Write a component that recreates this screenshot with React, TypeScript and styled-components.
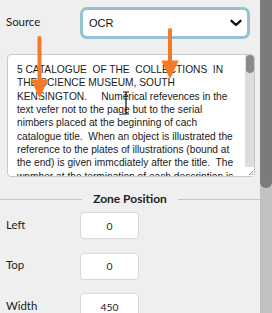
import React from "react";
import styled, { createGlobalStyle } from "styled-components";

const GlobalStyle = createGlobalStyle`
  html, body {
    margin: 0;
    padding: 0;
    background: #efefef;
    overflow: hidden;
  }
  body {
    font-family: Lato, "Open Sans", sans-serif;
    color: #1e1e1e;
  }
`;

const Frame = styled.div`
  display: flex;
  width: 272px;
  height: 313px;
  overflow: hidden;
  background: #efefef;
`;

const Panel = styled.div`
  position: relative;
  width: 260px;
  flex: none;
  padding-top: 7px;
`;

const PageTrack = styled.div`
  width: 12px;
  height: 313px;
  background: #c2c2c2;
`;

const PageThumb = styled.div`
  height: 188px;
  background: #7b7b7b;
  border-radius: 0 0 6px 6px;
`;

const FieldRow = styled.div`
  display: grid;
  grid-template-columns: 74px auto;
  align-items: center;
  padding-left: 6px;
  font-size: 11.4px;
  color: #1c1c1c;
`;

const Label = styled.span<{ $lift?: number }>`
  position: relative;
  top: ${(p) => -(p.$lift ?? 0)}px;
`;

const SelectBox = styled.div`
  box-sizing: border-box;
  width: 170px;
  height: 32px;
  border: 3px solid #93c2d2;
  border-radius: 7px;
  background: #fff;
  display: flex;
  align-items: center;
  justify-content: space-between;
  padding: 0 5px 0 6px;
  font-family: "Liberation Sans", Arial, sans-serif;
  font-size: 11px;
  color: #111;
`;

const TextWrap = styled.div`
  position: relative;
  margin: 15px 0 0 7px;
  width: 248px;
  height: 123px;
`;

const TextBox = styled.textarea`
  display: block;
  box-sizing: border-box;
  width: 100%;
  height: 100%;
  padding: 8px 12px 0 9px;
  border: 1px solid #c9c9c9;
  border-radius: 4px;
  background: #fff;
  font-family: "Liberation Sans", Arial, sans-serif;
  font-size: 10.2px;
  line-height: 13.35px;
  color: #1a1a1a;
  white-space: pre;
  overflow: hidden;
  resize: none;
  outline: none;
`;

const InnerTrack = styled.div`
  position: absolute;
  top: 1px;
  right: 1px;
  bottom: 1px;
  width: 9px;
  background: #dcdcdc;
  border-radius: 0 3px 3px 0;
  display: flex;
  flex-direction: column;
  justify-content: space-between;
`;

const InnerThumb = styled.div`
  height: 18px;
  margin: 0 0.5px;
  background: #8a8a8a;
  border-radius: 4px;
`;

const Grip = styled.div`
  width: 9px;
  height: 9px;
  background: #fff;
  display: flex;
  align-items: flex-end;
  justify-content: flex-end;
`;

const Divider = styled.div`
  display: flex;
  align-items: center;
  gap: 11px;
  width: 260px;
  margin-top: 15px;
  font-weight: 700;
  font-size: 12px;
  line-height: 14px;
  color: #222;
  &::before,
  &::after {
    content: "";
    flex: 1;
    height: 1px;
    background: #c6c6c6;
  }
`;

const Rows = styled.div`
  display: flex;
  flex-direction: column;
  gap: 13.5px;
  margin-top: 6px;
`;

const NumberBox = styled.div`
  box-sizing: border-box;
  width: 59px;
  height: 27px;
  border: 1px solid #d8d8d8;
  border-radius: 4px;
  background: #fff;
  display: flex;
  align-items: center;
  justify-content: center;
  font-size: 10.4px;
  color: #222;
`;

const Overlay = styled.svg`
  position: absolute;
  left: 0;
  top: 0;
  pointer-events: none;
`;

const Chevron = () => (
  <svg width="12" height="8" viewBox="0 0 12 8">
    <path d="M1.5 1.8 L6 6 L10.5 1.8" fill="none" stroke="#111" strokeWidth="2.3" strokeLinecap="round" strokeLinejoin="round" />
  </svg>
);

const GripLines = () => (
  <svg width="7" height="7" viewBox="0 0 7 7">
    <path d="M6 2 L2 6 M6 4.5 L4.5 6" stroke="#777" strokeWidth="0.9" />
  </svg>
);

const ocrText = [
  "5 CATALOGUE  OF THE  COLLECTIONS  IN",
  "THE SCIENCE MUSEUM, SOUTH",
  "KENSINGTON.     Numerical refevences in the",
  "text vefer not to the page but to the serial",
  "nimbers placed at the beginning of cach",
  "catalogue title.  When an object is illustrated the",
  "reference to the plates of illustrations (bound at",
  "the end) is given immcdiately after the title.  The",
  "wnmber at the termination of each description is",
  "the number of the object in the inventory.",
].join("\n");

const zone = [
  { name: "Left", value: "0" },
  { name: "Top", value: "0" },
  { name: "Width", value: "450" },
  { name: "Height", value: "120" },
];

const Arrow = ({ x, y1, y2 }: { x: number; y1: number; y2: number }) => (
  <g fill="#f57a25" stroke="#f57a25">
    <line x1={x} y1={y1} x2={x} y2={y2 - 14} strokeWidth="4" strokeLinecap="round" />
    <path d={`M${x - 8} ${y2 - 17} L${x + 8} ${y2 - 17} L${x} ${y2} Z`} strokeWidth="1" strokeLinejoin="round" />
  </g>
);

export default function App() {
  return (
    <>
      <GlobalStyle />
      <Frame>
        <Panel>
          <FieldRow>
            <Label $lift={2}>Source</Label>
            <SelectBox>
              <span>OCR</span>
              <Chevron />
            </SelectBox>
          </FieldRow>
          <TextWrap>
            <TextBox readOnly defaultValue={ocrText} spellCheck={false} />
            <InnerTrack>
              <InnerThumb />
              <Grip>
                <GripLines />
              </Grip>
            </InnerTrack>
          </TextWrap>
          <Divider>Zone Position</Divider>
          <Rows>
            {zone.map((z) => (
              <FieldRow key={z.name}>
                <Label $lift={1.5}>{z.name}</Label>
                <NumberBox>{z.value}</NumberBox>
              </FieldRow>
            ))}
          </Rows>
          <Overlay width="260" height="313">
            <Arrow x={39.5} y1={38} y2={97} />
            <Arrow x={170} y1={30} y2={78} />
            <g stroke="#111" strokeWidth="1.2" fill="none">
              <path d="M123 92 L129 92 M126 92 L126 114 M123 114 L129 114" />
            </g>
          </Overlay>
        </Panel>
        <PageTrack>
          <PageThumb />
        </PageTrack>
      </Frame>
    </>
  );
}
